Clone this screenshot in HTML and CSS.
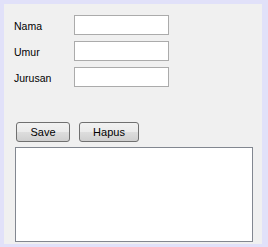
FILE: index.html
```html
<!DOCTYPE html>
<html lang="id">
<head>
    <meta charset="UTF-8">
    <title>Form Mahasiswa</title>
    <link rel="stylesheet" href="styles.css">
</head>
<body>
    <div class="panel">
        <div class="form-row">
            <label for="nama">Nama</label>
            <input type="text" id="nama">
        </div>
        <div class="form-row">
            <label for="umur">Umur</label>
            <input type="text" id="umur">
        </div>
        <div class="form-row">
            <label for="jurusan">Jurusan</label>
            <input type="text" id="jurusan">
        </div>

        <div class="buttons">
            <button class="btn btn-save">Save</button>
            <button class="btn btn-hapus">Hapus</button>
        </div>

        <textarea class="output"></textarea>
    </div>
</body>
</html>
```

FILE: styles.css
```css
html, body {
    margin: 0;
    padding: 0;
}
body {
    background: #e1e1f9;
    font-family: 'Liberation Sans', Arial, sans-serif;
    font-size: 10.5px;
    color: #000;
    padding: 4px 6px 3px 4px;
}
.panel {
    background: #f0f0f0;
    height: 240px;
    box-sizing: border-box;
    padding: 11px 0 0 10px;
}
.form-row {
    display: flex;
    align-items: center;
    height: 20px;
    margin-bottom: 6px;
}
.form-row label {
    width: 60px;
    position: relative;
    top: 1px;
}
.form-row input {
    width: 95px;
    height: 20px;
    box-sizing: border-box;
    border: 1px solid #ababab;
    background: #fff;
    margin: 0;
    padding: 0 3px;
    font: inherit;
}
.buttons {
    display: flex;
    gap: 9px;
    margin: 35px 0 0 2px;
}
.btn {
    height: 20px;
    box-sizing: border-box;
    border: 1px solid #707070;
    border-radius: 3px;
    background: linear-gradient(#f2f2f2 0%, #ebebeb 48%, #dddddd 52%, #cfcfcf 100%);
    font-family: inherit;
    font-size: 11px;
    color: #000;
    padding: 0;
    margin: 0;
}
.btn-save {
    width: 54px;
}
.btn-hapus {
    width: 60px;
}
.output {
    display: block;
    width: 238px;
    height: 95px;
    box-sizing: border-box;
    margin: 5px 0 0 1px;
    border: 1px solid #828790;
    background: #fff;
    resize: none;
    padding: 0;
}
```
